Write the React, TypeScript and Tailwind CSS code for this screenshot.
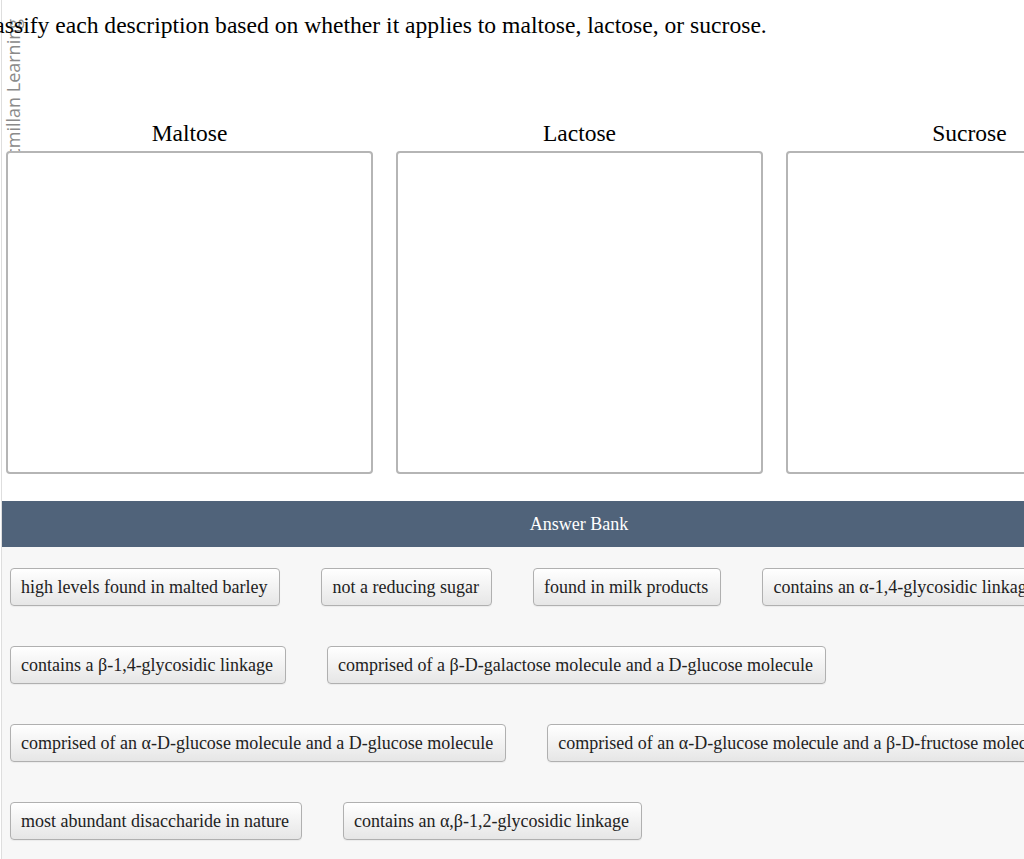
import React from 'react'

const SUGARS = ['Maltose', 'Lactose', 'Sucrose']

const ROWS: string[][] = [
  [
    'high levels found in malted barley',
    'not a reducing sugar',
    'found in milk products',
    'contains an α-1,4-glycosidic linkage',
  ],
  [
    'contains a β-1,4-glycosidic linkage',
    'comprised of a β-D-galactose molecule and a D-glucose molecule',
  ],
  [
    'comprised of an α-D-glucose molecule and a D-glucose molecule',
    'comprised of an α-D-glucose molecule and a β-D-fructose molecule',
  ],
  ['most abundant disaccharide in nature', 'contains an α,β-1,2-glycosidic linkage'],
]

function Chip({ label }: { label: string }) {
  return (
    <div className="h-[38px] shrink-0 flex items-center pl-[10px] pr-[12px] rounded-[4px] border border-[#b0b0b0] bg-gradient-to-b from-white to-[#e6e6e6] text-[18px] text-[#222] whitespace-nowrap shadow-[0_1px_1px_rgba(0,0,0,0.05)]">
      {label}
    </div>
  )
}

export default function App() {
  return (
    <div className="relative w-[1024px] h-[859px] overflow-hidden bg-white font-['Liberation_Serif',serif] text-black">
      {/* publisher watermark, sits behind the drop zones */}
      <div className="absolute left-[3px] top-[19px] z-0 [writing-mode:vertical-rl] rotate-180 font-['Open_Sans',sans-serif] text-[18px] leading-[20px] text-[#8a8a8a] whitespace-nowrap">
        Macmillan Learning
      </div>

      <div className="relative z-10 ml-px w-[1160px] h-full border-l border-[#dedede]">
        <p className="ml-[-30px] pt-[12px] text-[23.6px] leading-[27px] whitespace-nowrap">
          Classify each description based on whether it applies to maltose, lactose, or sucrose.
        </p>

        {/* drop targets */}
        <div className="mt-[81px] ml-[4px] flex gap-[23px]">
          {SUGARS.map((name) => (
            <div key={name} className="w-[367px] shrink-0 flex flex-col">
              <h3 className="text-center text-[23.5px] leading-[27px] mb-[4px]">{name}</h3>
              <div className="h-[323px] rounded-[4px] border-2 border-[#b5b5b5] bg-white" />
            </div>
          ))}
        </div>

        {/* answer bank */}
        <div className="mt-[27px] w-[1154px]">
          <div className="h-[46px] flex items-center justify-center bg-[#50637a] text-white text-[18px]">
            Answer Bank
          </div>
          <div className="bg-[#f7f7f7] pt-[21px] pl-[8px] pb-[20px] flex flex-col gap-[40px]">
            {ROWS.map((row, i) => (
              <div key={i} className="flex gap-[41px]">
                {row.map((label) => (
                  <Chip key={label} label={label} />
                ))}
              </div>
            ))}
          </div>
        </div>
      </div>
    </div>
  )
}
